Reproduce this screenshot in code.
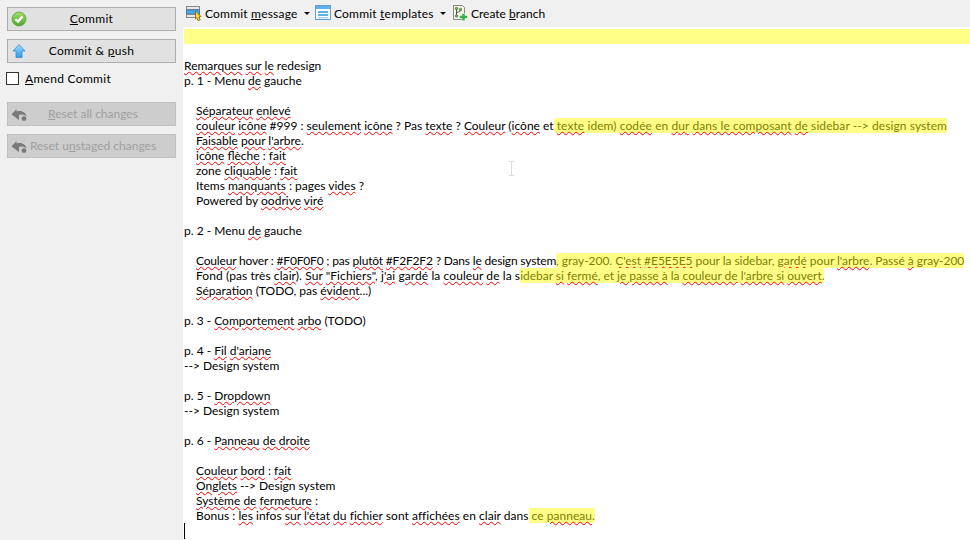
<script lang="ts">
  // left column + toolbar of the commit dialog, body is the commit message text
</script>

<div class="dialog">
  <aside class="sidebar">
    <button class="action">
      <svg class="ico" viewBox="0 0 16 16" width="16" height="16">
        <defs>
          <linearGradient id="okFill" x1="0" y1="0" x2="0" y2="1">
            <stop offset="0" stop-color="#a5dc6c" />
            <stop offset="1" stop-color="#4fa52c" />
          </linearGradient>
        </defs>
        <circle cx="8" cy="8" r="7" fill="url(#okFill)" stroke="#5da63a" stroke-width="0.8" />
        <path d="M4.4 8.2 7 10.6 11.6 5.6" fill="none" stroke="#fff" stroke-width="2.2" />
      </svg>
      <span><span class="key">C</span>ommit</span>
    </button>
    <button class="action">
      <svg class="ico" viewBox="0 0 16 16" width="16" height="16">
        <defs>
          <linearGradient id="upFill" x1="0" y1="0" x2="0" y2="1">
            <stop offset="0" stop-color="#9fdcff" />
            <stop offset="1" stop-color="#2b9cec" />
          </linearGradient>
        </defs>
        <path d="M8 1.5 14 8H11V14.5H5V8H2Z" fill="url(#upFill)" stroke="#2f8fd6" stroke-width="0.8" />
      </svg>
      <span>Commit &amp; <span class="key">p</span>ush</span>
    </button>

    <label class="amend">
      <input type="checkbox" />
      <span><span class="key">A</span>mend Commit</span>
    </label>

    <button class="action off first-off" disabled>
      <svg class="ico" viewBox="0 0 16 16" width="16" height="16">
        <path d="M0.5 8.5 5.5 3V5.4C10 4.4 14.5 6 15.5 10.5 13 8.5 10 8.2 8 9V14Z" fill="#7a7a7a" />
        <circle cx="13" cy="12.6" r="2.4" fill="#7a7a7a" />
      </svg>
      <span><span class="key">R</span>eset all changes</span>
    </button>
    <button class="action off" disabled>
      <svg class="ico" viewBox="0 0 16 16" width="16" height="16">
        <path d="M0.5 8.5 5.5 3V5.4C10 4.4 14.5 6 15.5 10.5 13 8.5 10 8.2 8 9V14Z" fill="#7a7a7a" />
        <circle cx="13" cy="12.6" r="2.4" fill="#7a7a7a" />
      </svg>
      <span>Reset u<span class="key">n</span>staged changes</span>
    </button>
  </aside>

  <main class="editor">
    <div class="toolbar">
      <button class="tool tool-msg">
        <svg viewBox="0 0 16 16" width="16" height="16">
          <rect x="0.5" y="1.5" width="13" height="3" fill="#e8e8e8" stroke="#888" />
          <rect x="0.5" y="5" width="13" height="4" fill="#4aa8e8" stroke="#3a7fb8" />
          <rect x="0.5" y="9.5" width="13" height="3" fill="#e8e8e8" stroke="#888" />
          <path d="M9.5 6 15 11.5 12.8 12 14.2 15 12 15.6 10.8 12.8 9.5 14Z" fill="#f5d63c" stroke="#6b5a10" stroke-width="0.7" />
        </svg>
        <span>Commit <span class="key">m</span>essage</span>
        <i class="caret"></i>
      </button>
      <button class="tool tool-tpl">
        <svg viewBox="0 0 16 16" width="16" height="16">
          <rect x="0.5" y="0.5" width="15" height="14" fill="#fff" stroke="#5f9fd0" />
          <rect x="1" y="1" width="14" height="3" fill="#5cb2ec" />
          <rect x="3" y="6" width="10" height="2" fill="#5cb2ec" />
          <rect x="3" y="9" width="10" height="2" fill="#5cb2ec" />
          <rect x="3" y="12" width="10" height="1.5" fill="#a9d6f2" />
        </svg>
        <span>Commit <span class="key">t</span>emplates</span>
        <i class="caret"></i>
      </button>
      <button class="tool">
        <svg viewBox="0 0 16 16" width="16" height="16">
          <path d="M1.5 0.5H10.5L12.5 2.5V14.5H1.5Z" fill="#f4f4ea" stroke="#8a8a80" />
          <path d="M4.5 3.5V11M4.5 8.5C4.5 6.5 8.5 7.5 8.5 5" fill="none" stroke="#4c5a44" />
          <circle cx="4.5" cy="3.5" r="1.3" fill="#6fae50" stroke="#3f5a34" stroke-width="0.5" />
          <circle cx="4.5" cy="11" r="1.3" fill="#6fae50" stroke="#3f5a34" stroke-width="0.5" />
          <circle cx="8.5" cy="4.5" r="1.3" fill="#6fae50" stroke="#3f5a34" stroke-width="0.5" />
          <path d="M10 8.5H13V10.5H15.5V13.5H13V15.8H10V13.5H7.5V10.5H10Z" fill="#37b34a" stroke="#fff" stroke-width="0.5" />
        </svg>
        <span>Create <span class="key">b</span>ranch</span>
      </button>
    </div>

    <div class="message">
      <div class="banner"></div>
      <div class="text">
        <p><u>Remarques</u> <u>sur</u> <u>le</u> redesign</p>
        <p>p. 1 - Menu <u>de</u> gauche</p>
        <p>&nbsp;</p>
        <p class="in"><u>Séparateur</u> <u>enlevé</u></p>
        <p class="in"><u>couleur</u> <u>icône</u> #999 : <u>seulement</u> <u>icône</u> ? Pas <u>texte</u> ? <u>Couleur</u> (<u>icône</u> et<mark class="wide">&nbsp;<u>texte</u> idem) <u>codée</u> en <u>dur</u> <u>dans le composant</u> <u>de</u> sidebar --&gt; design system</mark></p>
        <p class="in"><u>Faisable</u> <u>pour</u> <u>l'arbre</u>.</p>
        <p class="in"><u>icône</u> <u>flèche</u> : <u>fait</u></p>
        <p class="in">zone <u>cliquable</u> : <u>fait</u></p>
        <p class="in">Items <u>manquants</u> : pages <u>vides</u> ?</p>
        <p class="in">Powered by <u>oodrive</u> <u>viré</u></p>
        <p>&nbsp;</p>
        <p>p. 2 - Menu <u>de</u> gauche</p>
        <p>&nbsp;</p>
        <p class="in tight"><u>Couleur</u> hover : <u>#F0F0F0</u> ; pas <u>plutôt</u> <u>#F2F2F2</u> ? Dans <u>le</u> design system<mark>, gray-200. <u>C'est</u> <u>#E5E5E5</u> pour la sidebar, <u>gardé</u> pour <u>l'arbre</u>. Passé <u>à</u> gray-200</mark></p>
        <p class="in wide"><span>Fond (pas très <u>clair</u>). <u>Sur</u> <u>"Fichiers"</u>, <u>j'ai</u> <u>gardé</u> la <u>couleur</u> <u>de</u> la s</span><mark>idebar <u>si</u> <u>fermé</u>, et <u>je passe à</u> la <u>couleur de</u> <u>l'arbre si</u> <u>ouvert</u>.</mark></p>
        <p class="in"><u>Séparation</u> (TODO, pas <u>évident</u>...)</p>
        <p>&nbsp;</p>
        <p>p. 3 - <u>Comportement</u> <u>arbo</u> (TODO)</p>
        <p>&nbsp;</p>
        <p>p. 4 - <u>Fil</u> <u>d'ariane</u></p>
        <p>--&gt; Design system</p>
        <p>&nbsp;</p>
        <p>p. 5 - <u>Dropdown</u></p>
        <p>--&gt; Design system</p>
        <p>&nbsp;</p>
        <p>p. 6 - <u>Panneau</u> <u>de droite</u></p>
        <p>&nbsp;</p>
        <p class="in"><u>Couleur</u> <u>bord</u> : <u>fait</u></p>
        <p class="in"><u>Onglets</u> --&gt; Design system</p>
        <p class="in"><u>Système</u> <u>de</u> <u>fermeture</u> :</p>
        <p class="in last"><span>Bonus : <u>les</u> infos <u>sur</u> <u>l'état</u> <u>du</u> <u>fichier</u> sont <u>affichées</u> en <u>clair</u> dans</span><mark>&nbsp;ce <u>panneau</u>.</mark></p>
        <p class="caret-line"><i class="text-caret"></i></p>
      </div>
      <i class="ibeam"></i>
    </div>
  </main>
</div>

<style>
  :global(body) {
    margin: 0;
    overflow: hidden;
  }

  .dialog {
    display: flex;
    width: 970px;
    height: 540px;
    font-family: "Lato", sans-serif;
    font-size: 12px;
    color: #000;
    background: #f0f0f0;
    overflow: hidden;
  }

  .sidebar {
    display: flex;
    flex-direction: column;
    flex: none;
    box-sizing: border-box;
    width: 183px;
    padding: 7px 7px 0;
    letter-spacing: 0.3px;
  }

  .action {
    position: relative;
    display: flex;
    align-items: center;
    justify-content: center;
    box-sizing: border-box;
    width: 169px;
    height: 24px;
    margin-bottom: 8px;
    padding: 0 0 2px;
    font: inherit;
    letter-spacing: inherit;
    color: #000;
    background: #e1e1e1;
    border: 1px solid #adadad;
  }

  .action .ico {
    position: absolute;
    left: 3px;
    top: 3px;
  }

  .action.off {
    padding-left: 3px;
    letter-spacing: 0;
    color: #a0a0a0;
    background: #cdcdcd;
    border-color: #bfbfbf;
  }

  .first-off {
    margin-top: 16px;
  }

  .key {
    text-decoration: underline;
  }

  .amend {
    display: flex;
    align-items: center;
    gap: 6px;
    height: 15px;
    margin-left: -1px;
  }

  .amend input {
    appearance: none;
    box-sizing: border-box;
    width: 13px;
    height: 13px;
    margin: 0;
    background: #fff;
    border: 1px solid #333;
  }

  .editor {
    display: flex;
    flex-direction: column;
    flex: 1;
    min-width: 0;
  }

  .toolbar {
    display: flex;
    align-items: center;
    flex: none;
    height: 27px;
    padding-left: 3px;
  }

  .tool {
    display: flex;
    align-items: center;
    gap: 3px;
    padding: 0;
    font: inherit;
    color: #000;
    background: none;
    border: 0;
  }

  .tool svg {
    margin-top: -2px;
  }

  .tool-msg {
    width: 129px;
    letter-spacing: 0.2px;
  }

  .tool-tpl {
    width: 137px;
    letter-spacing: 0.2px;
  }

  .caret {
    width: 0;
    height: 0;
    margin-left: 3px;
    border: 3px solid transparent;
    border-top: 3px solid #111;
    border-bottom: 0;
  }

  .message {
    position: relative;
    flex: 1;
    background: #fff;
    padding: 2px 0 0 1px;
  }

  .banner {
    height: 15px;
    background: #ffff88;
  }

  .text {
    padding-top: 14px;
  }

  p {
    height: 15px;
    margin: 0;
    line-height: 15px;
    white-space: pre;
  }

  .in {
    padding-left: 12px;
  }

  .tight {
    letter-spacing: -0.18px;
  }

  .tight mark {
    letter-spacing: -0.04px;
  }

  .wide {
    letter-spacing: 0.08px;
  }

  .wide mark {
    letter-spacing: -0.02px;
  }

  .last {
    letter-spacing: 0.03px;
  }

  u {
    text-decoration: underline wavy #f00 1px;
    text-underline-offset: 1px;
  }

  mark {
    display: inline-block;
    height: 15px;
    color: #808000;
    background: #ffff88;
    border-radius: 2px;
    line-height: 15px;
  }

  .text-caret {
    display: block;
    width: 1px;
    height: 16px;
    background: #000;
  }

  .ibeam {
    position: absolute;
    left: 326px;
    top: 134px;
    width: 5px;
    height: 15px;
    border-top: 1px solid #ddd;
    border-bottom: 1px solid #ddd;
    box-sizing: border-box;
    background: linear-gradient(#ddd, #ddd) center / 1px 100% no-repeat;
  }
</style>
